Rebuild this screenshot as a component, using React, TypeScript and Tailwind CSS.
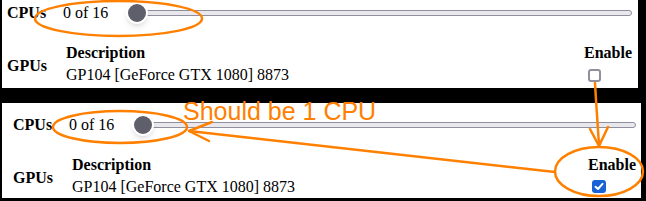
import React from "react";

const ORANGE = "#ff8000";

function Slider() {
  return (
    <div className="relative flex-1 h-[22px] flex items-center">
      <div className="absolute left-[10px] right-0 h-[6px] rounded-full bg-[#e9e9ed] border border-[#8f8f9d]" />
      <div className="relative w-[22px] h-[22px] rounded-full bg-[#5f5f6b] border-2 border-white shadow-md" />
    </div>
  );
}

function Checkbox({ checked }: { checked: boolean }) {
  if (checked) {
    return (
      <div className="w-[14px] h-[13px] rounded-[3px] bg-[#1762d6] flex items-center justify-center">
        <svg width="10" height="9" viewBox="0 0 10 9">
          <path d="M1.5 4.8 L4 7 L8.5 1.8" fill="none" stroke="white" strokeWidth="2" strokeLinecap="round" strokeLinejoin="round" />
        </svg>
      </div>
    );
  }
  return <div className="w-[13px] h-[13px] rounded-[3px] border-2 border-[#8f8f9d] bg-white" />;
}

function PanelBody({ checked }: { checked: boolean }) {
  return (
    <>
      {/* CPU row */}
      <div className="flex items-center h-[26px] leading-[18px]">
        <span className="w-[56px] font-bold font-['Liberation_Serif']">CPUs</span>
        <span className="font-['Liberation_Serif'] font-normal">0 of 16</span>
        <div className="ml-[18px] flex-1 flex">
          <Slider />
        </div>
      </div>

      {/* GPU table */}
      <div className="flex mt-[16px]">
        <span className="w-[59px] pt-[15px] leading-[18px] font-bold font-['Liberation_Serif']">GPUs</span>
        <div className="flex-1 flex flex-col">
          <div className="flex leading-[22px] font-bold font-['Liberation_Serif']">
            <span className="flex-1">Description</span>
            <span>Enable</span>
          </div>
          <div className="flex h-[22px] leading-[22px]">
            <span className="flex-1 font-['Liberation_Serif'] font-normal">GP104 [GeForce GTX 1080] 8873</span>
            <div className={checked ? "w-[47px] pt-[4px] pl-[3px]" : "w-[47px] pt-[5px] pl-[3px]"}>
              <Checkbox checked={checked} />
            </div>
          </div>
        </div>
      </div>
    </>
  );
}

export default function App() {
  return (
    <div className="relative w-[646px] h-[201px] bg-black overflow-hidden text-black text-[16px] font-['Liberation_Serif']">
      <div className="ml-[2px] w-[636px] h-[88px] bg-white pl-[5px] pr-[6px]">
        <PanelBody checked={false} />
      </div>
      <div className="mt-[15px] ml-[2px] w-[639px] h-[95px] bg-white pl-[11px] pr-[5px] pt-[9px]">
        <PanelBody checked={true} />
      </div>

      {/* annotations */}
      <svg className="absolute inset-0 pointer-events-none" width="646" height="201" viewBox="0 0 646 201">
        <g fill="none" stroke={ORANGE} strokeWidth="2.5" strokeLinecap="round" strokeLinejoin="round">
          <ellipse cx="118.5" cy="18.5" rx="83.5" ry="17.5" />
          <ellipse cx="120" cy="127" rx="67" ry="16" />
          <ellipse cx="599" cy="171.5" rx="44" ry="24.5" />
          <path d="M555 172 L189 131" />
          <path d="M212 122 L189 131 L209 141" />
          <path d="M595 83 L596 100 L599 145" />
          <path d="M590 129 L599 146 L608 127" />
        </g>
      </svg>
      <span className="absolute left-[183px] top-[99px] leading-[25px] text-[25px] text-[#ff8000] font-['Liberation_Sans'] whitespace-nowrap">
        Should be 1 CPU
      </span>
    </div>
  );
}
